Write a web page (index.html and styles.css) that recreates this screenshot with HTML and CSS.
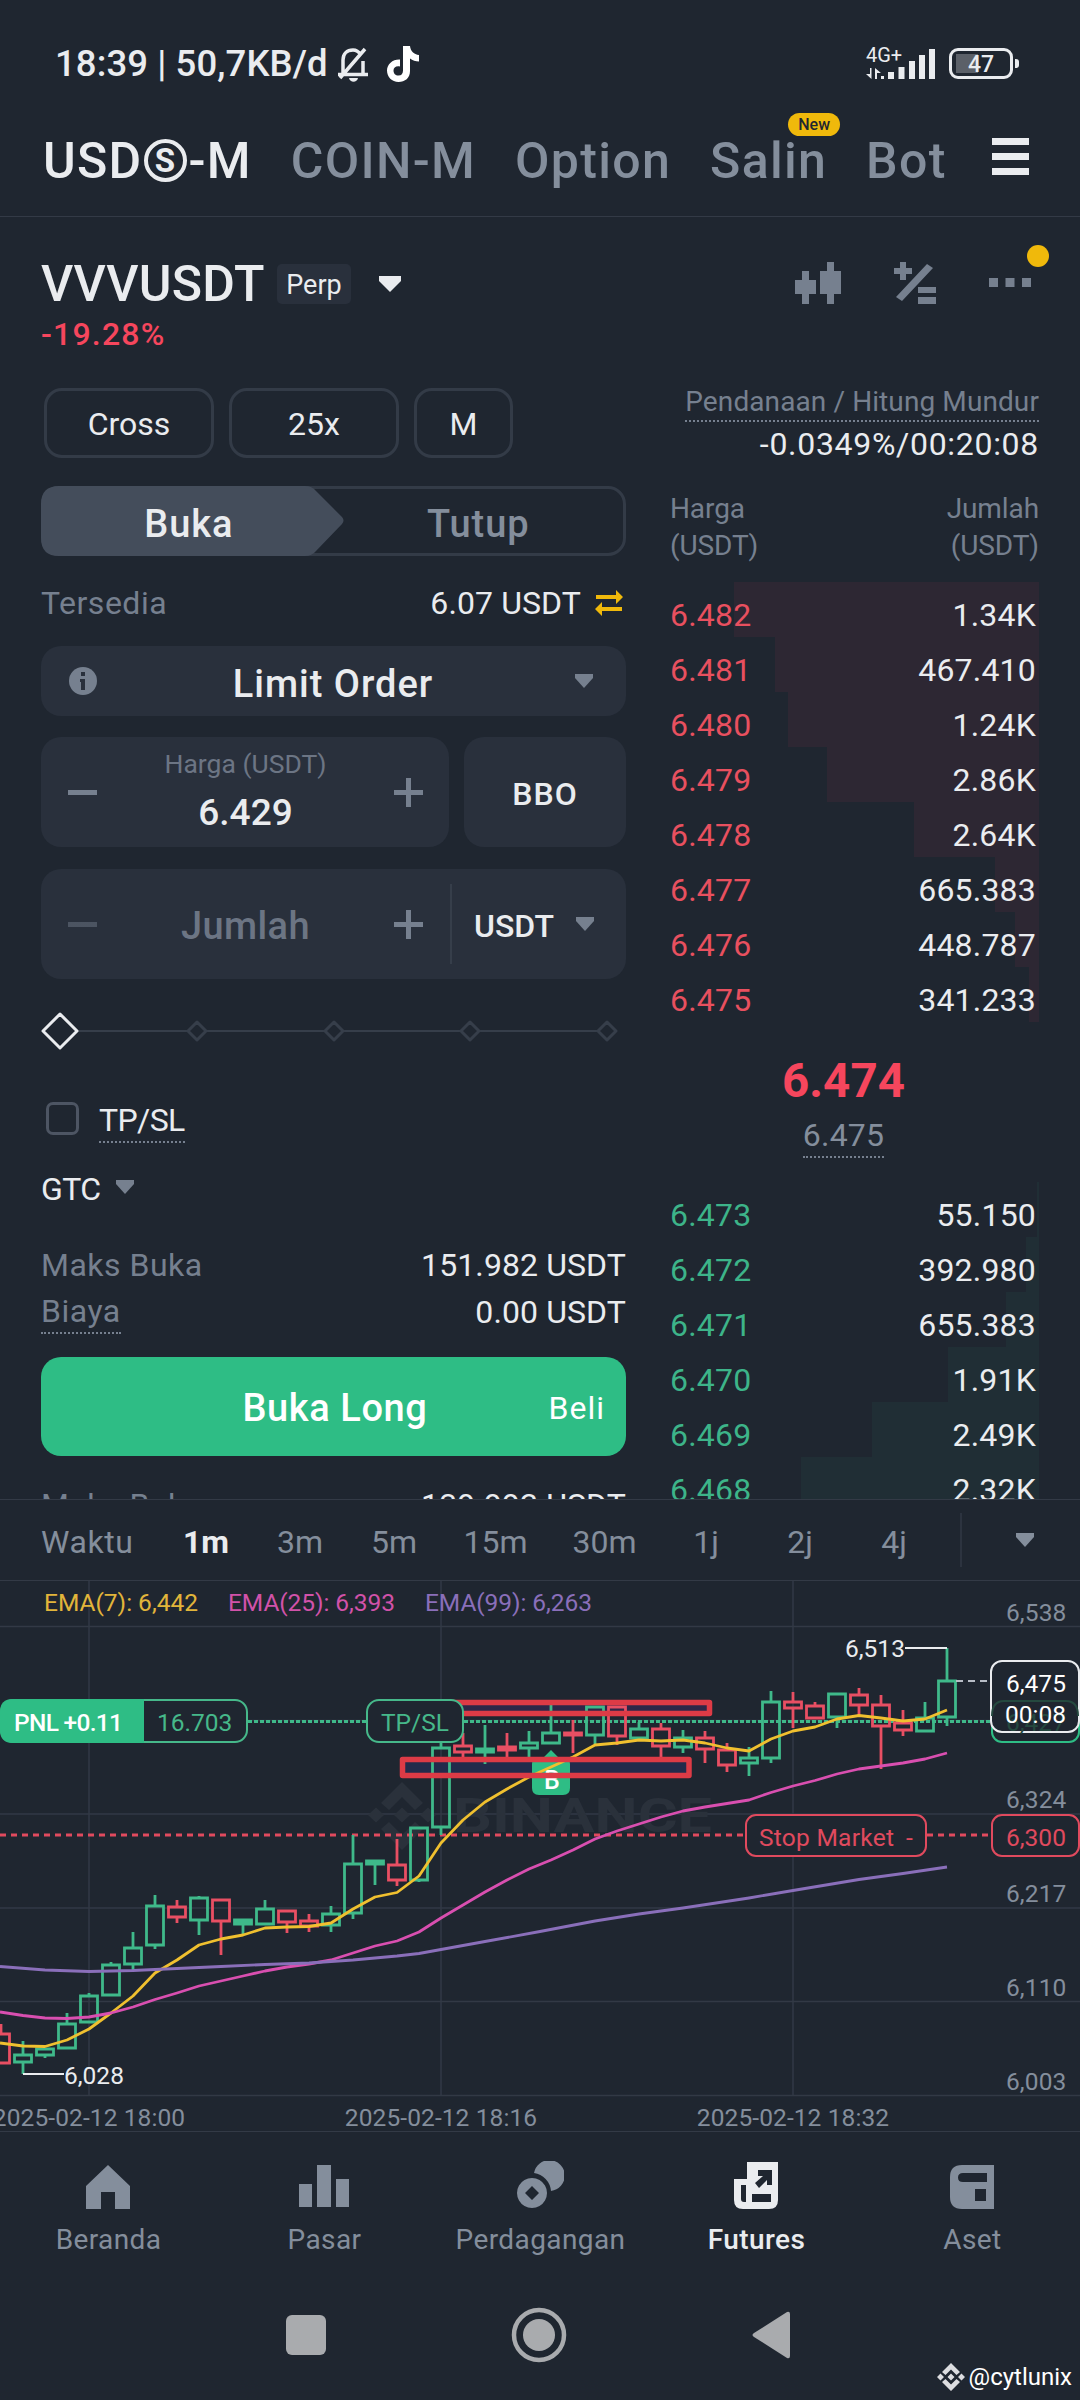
FILE: index.html
```
<!DOCTYPE html>
<html lang="id">
<head>
    <meta charset="UTF-8">
    <meta name="viewport" content="width=device-width, initial-scale=1.0">
    <title>VVVUSDT Perp</title>
    <link rel="stylesheet" href="styles.css">
</head>
<body>
    <div class="status-bar">
        <span class="status-text">18:39 | 50,7KB/d</span>
        <svg class="bell" width="38" height="38" viewBox="0 0 38 38">
            <path d="M9 28V15c0-6 4-10 10-10 3 0 6 2 8 5M29 16v12M4 29.500h30M6 33L31 4" fill="none" stroke="#eaecef" stroke-width="3.500"/>
            <path d="M15 33h9c-1 5-8 5-9 0z" fill="#eaecef"/>
        </svg>
        <svg class="tiktok" width="34" height="38" viewBox="0 0 34 38">
            <path d="M17 1h7c.5 5 4 8.500 9 9v6.500c-3.500 0-6.500-1-9-3V26c0 7-5 11-11.500 11S1 32 1 25.500 7 14 14 14.500v7c-4-.8-6.500 1-6.500 4s2 5 5 5 4.500-2 4.500-5z" fill="#fff"/>
        </svg>
        <div class="signal">
            <span>4G+</span>
            <svg width="18" height="11" viewBox="0 0 18 11">
                <path d="M4 0v6h-4l5.500 5V0zM9 11V0l6 5h-4v6zM15 8h3v3h-3z" fill="#eaecef"/>
            </svg>
        </div>
        <svg class="bars" width="48" height="32" viewBox="0 0 48 32">
            <path d="M0 24h6v7H0zM10.500 19h6v12h-6zM21 13h6v18h-6zM31 7h6v24h-6zM41 1h6v30h-6z" fill="#eaecef"/>
        </svg>
        <div class="battery"><span>47</span></div>
    </div>

    <div class="tabs">
        <span class="tab active">USD<span class="coin">S</span>-M</span>
        <span class="tab">COIN-M</span>
        <span class="tab">Option</span>
        <span class="tab">Salin<span class="new">New</span></span>
        <span class="tab">Bot</span>
        <div class="menu"><i></i><i></i><i></i></div>
    </div>

    <div class="pair">
        <div class="pair-row">
            <span class="symbol">VVVUSDT</span>
            <span class="perp">Perp</span>
            <svg width="24" height="18" viewBox="0 0 24 18"><path d="M1 1h22v5L12 17 1 6z" fill="#eaecef"/></svg>
            <div class="pair-icons">
                <svg width="46" height="42" viewBox="0 0 46 42">
                    <path d="M0 18h7V9h7v9h7v14h-7v10H7V32H0zM25 9h7V0h7v9h7v23h-7v10h-7V32h-7z"/>
                </svg>
                <svg width="42" height="42" viewBox="0 0 42 42">
                    <path d="M6 0h6v6h6v6h-6v6H6v-6H0V6h6zM33 2l6 4L8 39l-6-4zM24 25h18v6H24zM24 35h18v7H24z"/>
                </svg>
                <svg width="42" height="42" viewBox="0 0 42 42">
                    <path d="M0 16h9v9H0zM16.500 16h9v9h-9zM33 16h9v9h-9z"/>
                </svg>
                <span class="dot"></span>
            </div>
        </div>
        <div class="change">-19.28%</div>
    </div>

    <div class="trade">
        <div class="order">
            <div class="modes">
                <div class="mode">Cross</div>
                <div class="mode">25x</div>
                <div class="mode small">M</div>
            </div>
            <div class="switch">
                <svg width="304" height="70" viewBox="0 0 304 70">
                    <path d="M18 0H264q7 0 11 5L301 31q3 3.500 0 7L275 65q-4 5-11 5H18Q0 70 0 52V18Q0 0 18 0z" fill="#444d5b"/>
                </svg>
                <span class="on">Buka</span>
                <span>Tutup</span>
            </div>
            <div class="line available">
                <span class="muted">Tersedia</span>
                <span class="value">6.07 USDT</span>
                <svg width="30" height="28" viewBox="0 0 30 28">
                    <path d="M2 6h20V1l7 7-7 7v-5H2zM28 18H8v-5l-7 7 7 7v-5h20z" fill="#f0b90b"/>
                </svg>
            </div>
            <div class="field select">
                <svg width="28" height="28" viewBox="0 0 28 28">
                    <circle cx="14" cy="14" r="14" fill="#76808f"/>
                    <path d="M12 5h4v4h-4zM11 12h5v11h-4v-8h-1z" fill="#29303c"/>
                </svg>
                <span>Limit Order</span>
                <svg width="18" height="14" viewBox="0 0 18 14"><path d="M0 0h18v4L9 14 0 4z" fill="#76808f"/></svg>
            </div>
            <div class="price-row">
                <div class="field stepper">
                    <span class="minus"></span>
                    <div class="price">
                        <label>Harga (USDT)</label>
                        <b>6.429</b>
                    </div>
                    <span class="plus"></span>
                </div>
                <div class="field bbo">BBO</div>
            </div>
            <div class="field amount">
                <div class="stepper">
                    <span class="minus dim"></span>
                    <span class="placeholder">Jumlah</span>
                    <span class="plus"></span>
                </div>
                <div class="unit">
                    USDT
                    <svg width="18" height="14" viewBox="0 0 18 14"><path d="M0 0h18v4L9 14 0 4z" fill="#76808f"/></svg>
                </div>
            </div>
            <svg class="slider" width="585" height="40" viewBox="0 0 585 40">
                <path d="M36 20H556" stroke="#363e4a" stroke-width="2"/>
                <g fill="#1f2630" stroke="#363e4a" stroke-width="3" stroke-linejoin="round">
                    <path d="M156 11l9 9-9 9-9-9zM293 11l9 9-9 9-9-9zM429 11l9 9-9 9-9-9zM566 11l9 9-9 9-9-9z"/>
                    <path d="M19 3l17 17-17 17L2 20z" stroke="#eaecef"/>
                </g>
            </svg>
            <div class="tpsl">
                <span class="checkbox"></span>
                <span class="dotted">TP/SL</span>
            </div>
            <div class="gtc">
                GTC
                <svg width="18" height="14" viewBox="0 0 18 14"><path d="M0 0h18v4L9 14 0 4z" fill="#76808f"/></svg>
            </div>
            <div class="line max"><span class="muted">Maks Buka</span><span class="value">151.982 USDT</span></div>
            <div class="line"><span class="muted dotted">Biaya</span><span class="value">0.00 USDT</span></div>
            <div class="buy"><span>Buka Long</span><em>Beli</em></div>
            <div class="line next"><span class="muted">Maks Buka</span><span class="value">139.992 USDT</span></div>
        </div>

        <div class="book">
            <div class="funding"><span>Pendanaan / Hitung Mundur</span></div>
            <div class="countdown">-0.0349%/00:20:08</div>
            <div class="book-head">
                <span>Harga<br>(USDT)</span>
                <span>Jumlah<br>(USDT)</span>
            </div>
            <div class="asks" id="asks"></div>
            <div class="last">6.474</div>
            <div class="mark"><span>6.475</span></div>
            <div class="bids" id="bids"></div>
        </div>
    </div>

    <div class="intervals">
        <span class="title">Waktu</span>
        <span class="active">1m</span>
        <span>3m</span>
        <span>5m</span>
        <span>15m</span>
        <span>30m</span>
        <span>1j</span>
        <span>2j</span>
        <span>4j</span>
        <div class="more">
            <svg width="18" height="14" viewBox="0 0 18 14"><path d="M0 0h18v4L9 14 0 4z" fill="#848e9c"/></svg>
        </div>
    </div>

    <!-- viewBox keeps the y offset of the chart on the screen -->
    <svg class="chart" width="1080" height="550" viewBox="0 1581 1080 550">
        <path class="grid" d="M0 1626.500H1080M0 1720.500H1080M0 1814H1080M0 1908H1080M0 2001.500H1080M0 2095.500H1080M89 1581V2095M441 1581V2095M793 1581V2095"/>
        <g class="logo-mark">
            <path d="M402 1782l21 21-8 7-13-13-13 13-8-7zM402 1850l21-21-8-7-13 13-13-13-8 7zM376 1807.500l8 7.500-8 7.500-8-7.500zM402 1807.500l8 7.500-8 7.500-8-7.500zM428 1807.500l8 7.500-8 7.500-8-7.500z"/>
            <text x="453" y="1832" textLength="259" lengthAdjust="spacingAndGlyphs">BINANCE</text>
        </g>
        <path d="M0 1835H745M927 1835H991" stroke="#e04a5e" stroke-width="3" stroke-dasharray="6 5"/>
        <path d="M248 1721.500H991" stroke="#3fb98a" stroke-width="3" stroke-dasharray="4 2"/>
        <rect x="430" y="1702" width="279" height="12" fill="#2e2748"/>
        <rect x="402" y="1759" width="287" height="17" fill="#232b4b"/>
        <path d="M551 1750l7 7h5q7 0 7 7v24q0 7-7 7h-24q-7 0-7-7v-24q0-7 7-7h5z" fill="#2ebd85"/>
        <text x="544" y="1789" class="buy-mark">B</text>
        <g id="candles"></g>
        <polyline class="ema" stroke="#f0c02f" points="0,2043 23,2046 45,2046.500 67,2040 89,2029 111,2013 133,1996 155,1973 177,1960 199,1945 221,1939 243,1935 265,1928 287,1927 309,1926.500 331,1923 353,1909 375,1897 397,1892.500 419,1876 441,1843 463,1820 485,1802 507,1789 529,1777 551,1767 573,1757 595,1745 617,1743 639,1740 661,1741 683,1740 705,1743 727,1748 749,1751 771,1739 793,1731 815,1727 837,1719 859,1715.500 881,1718 903,1721 925,1719 947,1710"/>
        <polyline class="ema" stroke="#d94fb0" points="0,2012 23,2015.500 45,2018 67,2018.500 89,2017 111,2013 133,2007 155,1999.500 177,1993 199,1986 221,1981 243,1976 265,1971 287,1967 309,1964 331,1960 353,1953 375,1946 397,1941 419,1932 441,1918 463,1905 485,1892 507,1880 529,1869 551,1860 573,1850 595,1839 617,1831 639,1824 661,1817 683,1811 705,1807 727,1803.500 749,1800 771,1792.500 793,1786 815,1780.500 837,1774 859,1769 881,1766 903,1763 925,1759 947,1753"/>
        <polyline class="ema" stroke="#8a6fba" points="0,1966.500 45,1970 89,1971.500 133,1970.500 177,1968.500 221,1966.500 265,1964.500 309,1963 353,1960 397,1956 419,1953.500 441,1949.500 485,1941.500 540,1931.500 595,1921 639,1914 683,1908 749,1898 793,1890.500 859,1879.500 903,1873.500 947,1867"/>
        <g fill="none" stroke="#dd3b46" stroke-width="5.500" stroke-linejoin="round">
            <rect x="430" y="1702.500" width="279.500" height="11"/>
            <rect x="402.500" y="1759.500" width="286.500" height="16"/>
        </g>

        <g class="label">
            <text x="44" y="1611" fill="#e2b53a" textLength="154">EMA(7): 6,442</text>
            <text x="228" y="1611" fill="#d152a9" textLength="167">EMA(25): 6,393</text>
            <text x="425" y="1611" fill="#8a6fba" textLength="167">EMA(99): 6,263</text>
        </g>
        <g class="label axis">
            <text x="1006" y="1621">6,538</text>
            <text x="1006" y="1808">6,324</text>
            <text x="1006" y="1902">6,217</text>
            <text x="1006" y="1996">6,110</text>
            <text x="1006" y="2090">6,003</text>
            <text x="89" y="2126" text-anchor="middle">2025-02-12 18:00</text>
            <text x="441" y="2126" text-anchor="middle">2025-02-12 18:16</text>
            <text x="793" y="2126" text-anchor="middle">2025-02-12 18:32</text>
        </g>

        <path d="M905 1648H947M23 2074H64" stroke="#eaecef" stroke-width="2"/>
        <path d="M956 1681H990" stroke="#b7bdc6" stroke-width="2" stroke-dasharray="7 5"/>
        <g class="label" fill="#eaecef">
            <text x="845" y="1657">6,513</text>
            <text x="64" y="2084">6,028</text>
        </g>

        <rect class="tag" x="1" y="1700" width="246" height="42" rx="12" stroke="#46b88a"/>
        <path d="M144 1699V1743H13Q0 1743 0 1730V1712Q0 1699 13 1699z" fill="#2ebd85"/>
        <rect class="tag" x="367" y="1700" width="96" height="42" rx="12" stroke="#46b88a"/>
        <rect class="tag" x="746" y="1815" width="180" height="41" rx="10" stroke="#e04a5e"/>
        <rect class="tag" x="992" y="1815" width="87" height="41" rx="10" stroke="#e04a5e"/>
        <rect class="tag" x="992" y="1701" width="87" height="41" rx="10" stroke="#2ebd85"/>
        <rect class="tag" x="991" y="1661" width="88" height="71" rx="11" stroke="#eaecef"/>
        <path d="M992 1716Q992 1701 1004 1701H1066Q1078 1701 1078 1716" fill="none" stroke="#25493f" stroke-width="2"/>
        <text class="label" x="1006" y="1731" fill="#25493f">6,427</text>
        <g class="label">
            <text x="14" y="1731" fill="#fff" class="medium" textLength="109">PNL +0.11</text>
            <text x="157" y="1731" fill="#46b88a">16.703</text>
            <text x="381" y="1731" fill="#46b88a">TP/SL</text>
            <text x="759" y="1846" fill="#e04a5e" textLength="135">Stop Market</text>
            <text x="906" y="1846" fill="#e04a5e">-</text>
            <text x="1006" y="1846" fill="#e04a5e">6,300</text>
            <text x="1006" y="1692" fill="#fff">6,475</text>
            <text x="1005" y="1723" fill="#fff">00:08</text>
        </g>
    </svg>

    <div class="nav">
        <div class="nav-item">
            <svg width="44" height="44" viewBox="0 0 44 44"><path d="M22 0l22 21v23H29V27H15v17H0V21z"/></svg>
            <span>Beranda</span>
        </div>
        <div class="nav-item">
            <svg width="50" height="44" viewBox="0 0 50 44"><path d="M0 19h13v23H0zM18 0h14v42H18zM37 14h13v28H37z"/></svg>
            <span>Pasar</span>
        </div>
        <div class="nav-item">
            <svg width="48" height="48" viewBox="0 0 48 48">
                <path d="M18 12A15.500 15.500 0 1 1 35 30A20 20 0 0 0 18 12z"/>
                <path fill-rule="evenodd" d="M16 17a15 15 0 1 0 .01 0zM16 25l7 7-7 7-7-7z"/>
            </svg>
            <span>Perdagangan</span>
        </div>
        <div class="nav-item active">
            <svg width="44" height="47" viewBox="0 0 44 47">
                <path fill-rule="evenodd" d="M13 0h31v38q0 9-9 9H9q-9 0-9-9V17h13zM24 8v6h5l-8 7 4 5 8-8v5h5V8zM7 23v14q0 3 3 3h2V23zM18 32v8h19v-8z"/>
            </svg>
            <span>Futures</span>
        </div>
        <div class="nav-item">
            <svg width="44" height="44" viewBox="0 0 44 44">
                <path fill-rule="evenodd" d="M12 0h32v44H12Q0 44 0 32V12Q0 0 12 0zM13 8q-5 0-5 4.500T13 17h24V8zM25 24v12h11V24z"/>
            </svg>
            <span>Aset</span>
        </div>
    </div>

    <div class="system">
        <svg width="40" height="40" viewBox="0 0 40 40"><rect width="40" height="40" rx="6"/></svg>
        <svg width="56" height="56" viewBox="0 0 56 56">
            <circle cx="28" cy="28" r="25" fill="none" stroke="#a9abae" stroke-width="4.500"/>
            <circle cx="28" cy="28" r="16"/>
        </svg>
        <svg width="38" height="48" viewBox="0 0 38 48"><path d="M2 22L35 1q3-1 3 2v42q0 3-3 2L2 26q-3-2 0-4z"/></svg>
        <div class="author">
            <svg width="28" height="28" viewBox="0 0 28 28">
                <path d="M14 0l9 9-3.500 3L14 6.500 8.500 12 5 9zM14 28l9-9-3.500-3-5.500 5.500L8.500 16 5 19zM3.500 10.500L7 14l-3.500 3.500L0 14zM14 10.500l3.500 3.500-3.500 3.500-3.500-3.500zM24.500 10.500L28 14l-3.500 3.500L21 14z"/>
            </svg>
            @cytlunix
        </div>
    </div>

    <script src="script.js"></script>
</body>
</html>
```
FILE: styles.css
```
* {
    box-sizing: border-box;
}
body {
    margin: 0;
    width: 1080px;
    height: 2400px;
    overflow: hidden;
    font-family: Roboto, "Noto Sans", sans-serif;
    font-size: 32px;
    color: #eaecef;
    background: #1f2630;
}
svg {
    display: block;
    flex: none;
}

/* status bar */
.status-bar {
    display: flex;
    align-items: center;
    height: 94px;
    padding: 33px 67px 0 55px;
}
.status-text {
    font-size: 36.5px;
    font-weight: 500;
    width: 279px;
    white-space: nowrap;
    letter-spacing: 0.1px;
}
.tiktok {
    margin-left: 14px;
}
.signal {
    margin-left: auto;
    width: 22px;
    height: 32px;
    font-size: 20px;
    line-height: 14px;
    white-space: nowrap;
}
.signal svg {
    margin-top: 6px;
}
.battery {
    position: relative;
    margin-left: 13px;
    width: 64px;
    height: 31px;
    border: 3px solid #eaecef;
    border-radius: 9px;
    background: linear-gradient(#5b6068, #5b6068) 4px 3px / 22px 19px no-repeat;
    font-size: 23px;
    font-weight: 500;
    line-height: 27px;
    text-align: center;
}
.battery::after {
    content: "";
    position: absolute;
    right: -9px;
    top: 8px;
    width: 4px;
    height: 9px;
    border-radius: 0 3px 3px 0;
    background: #eaecef;
}

/* product tabs */
.tabs {
    display: flex;
    align-items: center;
    gap: 39px;
    height: 123px;
    padding: 12px 51px 0 43px;
    border-bottom: 1px solid #333a46;
}
.tab {
    position: relative;
    font-size: 50px;
    font-weight: 500;
    line-height: 60px;
    color: #848e9c;
    white-space: nowrap;
    letter-spacing: 1.3px;
}
.tab.active {
    color: #eaecef;
}
.coin {
    display: inline-block;
    width: 43px;
    height: 43px;
    margin: -6px 2px 0 1px;
    border: 4px solid #eaecef;
    border-radius: 50%;
    font-size: 33px;
    font-weight: 700;
    line-height: 36px;
    letter-spacing: 0;
    text-align: center;
    vertical-align: 6px;
}
.new {
    position: absolute;
    right: -13px;
    top: -18px;
    width: 52px;
    height: 23px;
    border-radius: 12px;
    background: #f0b90b;
    color: #1f2630;
    font-size: 16px;
    letter-spacing: 0;
    line-height: 24px;
    text-align: center;
}
.menu {
    display: flex;
    flex-direction: column;
    gap: 8px;
    margin: 0 0 9px auto;
}
.menu i {
    width: 37px;
    height: 7px;
    background: #eaecef;
}

/* pair header */
.pair {
    height: 137px;
    padding: 37px 49px 0 41px;
}
.pair-row {
    display: flex;
    align-items: center;
    height: 60px;
}
.symbol {
    width: 236px;
    font-size: 50px;
    font-weight: 500;
    letter-spacing: 0.3px;
}
.perp {
    margin-right: 27px;
    width: 74px;
    height: 40px;
    border-radius: 5px;
    background: #29303c;
    font-size: 27px;
    line-height: 43px;
    text-align: center;
}
.pair-icons {
    position: relative;
    display: flex;
    gap: 53px;
    margin: -2px 0 0 auto;
    fill: #76808f;
}
.dot {
    position: absolute;
    right: -18px;
    top: -17px;
    width: 22px;
    height: 22px;
    border-radius: 50%;
    background: #f0b90b;
}
.change {
    color: #f6465d;
    font-weight: 500;
    line-height: 40px;
    letter-spacing: 1.2px;
}

/* order form */
.trade {
    display: flex;
    justify-content: space-between;
    height: 1146px;
    padding: 0 41px;
    border-bottom: 1px solid #333a46;
    overflow: hidden;
}
.order {
    width: 585px;
    padding-top: 34px;
}
.muted {
    color: #76808f;
    letter-spacing: 0.5px;
}
.modes {
    display: flex;
    gap: 15px;
    margin-left: 3px;
}
.mode {
    width: 170px;
    height: 70px;
    border: 3px solid #333b47;
    border-radius: 18px;
    line-height: 67px;
    text-align: center;
}
.mode.small {
    width: 99px;
}
.switch {
    position: relative;
    display: flex;
    height: 70px;
    margin-top: 28px;
    border: 3px solid #333b47;
    border-radius: 18px;
    font-size: 38px;
    font-weight: 500;
    line-height: 70px;
    letter-spacing: 0.9px;
    color: #848e9c;
}
.switch svg {
    position: absolute;
    left: -3px;
    top: -3px;
}
.switch span {
    position: relative;
    width: 290px;
    text-align: center;
}
.switch .on {
    color: #eaecef;
}
.line {
    display: flex;
    align-items: center;
    height: 47px;
    line-height: 42px;
}
.line .value {
    margin-left: auto;
    letter-spacing: 0.1px;
}
.available {
    height: 44px;
    margin-top: 25px;
    padding-right: 2px;
}
.available svg {
    margin-left: 13px;
}
.field {
    border-radius: 20px;
    background: #29303c;
}
.select {
    display: flex;
    align-items: center;
    justify-content: space-between;
    height: 70px;
    margin-top: 21px;
    padding: 0 33px 0 28px;
    font-size: 38px;
    font-weight: 500;
    line-height: 70px;
    letter-spacing: 1px;
}
.select span {
    padding: 6px 6px 0 0;
}
.price-row {
    display: flex;
    gap: 15px;
    margin-top: 21px;
}
.stepper {
    display: flex;
    align-items: center;
    justify-content: space-between;
    width: 408px;
    height: 110px;
    padding: 0 26px 0 27px;
}
.minus,
.plus {
    width: 29px;
    height: 29px;
    background: linear-gradient(#76808f, #76808f) center / 29px 5px no-repeat;
}
.plus {
    background: linear-gradient(#76808f, #76808f) center / 29px 5px no-repeat,
                linear-gradient(#76808f, #76808f) center / 5px 29px no-repeat;
}
.dim {
    opacity: 0.45;
}
.price {
    display: flex;
    flex-direction: column;
    height: 97px;
    text-align: center;
}
.price label {
    font-size: 26.5px;
    line-height: 40px;
    color: #6c7584;
}
.price b {
    font-size: 37px;
    font-weight: 500;
    line-height: 58px;
}
.bbo {
    width: 162px;
    height: 110px;
    font-weight: 500;
    line-height: 115px;
    letter-spacing: 1px;
    text-align: center;
}
.amount {
    display: flex;
    align-items: center;
    height: 110px;
    margin-top: 22px;
}
.placeholder {
    padding-top: 4px;
    font-size: 38px;
    color: #6c7584;
    font-weight: 500;
    letter-spacing: 0.4px;
}
.unit {
    display: flex;
    align-items: center;
    justify-content: space-between;
    width: 144px;
    height: 80px;
    margin-left: 1px;
    padding: 4px 0 0 22px;
    border-left: 2px solid #363e4a;
    font-weight: 500;
}
.unit svg {
    margin: 0 0 4px;
}
.slider {
    margin-top: 32px;
}
.tpsl {
    display: flex;
    align-items: center;
    height: 44px;
    margin-top: 48px;
    padding-left: 5px;
    line-height: 42px;
    letter-spacing: -0.6px;
}
.checkbox {
    width: 33px;
    height: 33px;
    margin: 0 20px 6px 0;
    border: 3px solid #4d5563;
    border-radius: 7px;
}
.dotted {
    border-bottom: 2px dotted #76808f;
}
.gtc {
    display: flex;
    align-items: center;
    height: 44px;
    margin-top: 24px;
    letter-spacing: -0.6px;
}
.gtc svg {
    margin: 0 0 5px 16px;
}
.max {
    margin-top: 30px;
}
.buy {
    position: relative;
    height: 99px;
    margin-top: 22px;
    padding-left: 3px;
    border-radius: 20px;
    background: #2ebd85;
    color: #fff;
    font-size: 38px;
    font-weight: 500;
    line-height: 103px;
    letter-spacing: 0.6px;
    text-align: center;
}
.buy em {
    position: absolute;
    right: 21px;
    font-size: 32px;
    font-style: normal;
    font-weight: 400;
    letter-spacing: 1px;
}
.next {
    margin-top: 25px;
}

/* order book */
.book {
    width: 369px;
    padding-top: 29px;
    letter-spacing: 0.2px;
}
.funding {
    font-size: 28px;
    line-height: 37px;
    text-align: right;
    letter-spacing: 0.1px;
    color: #76808f;
    white-space: nowrap;
}
.funding span {
    display: inline-block;
    border-bottom: 2px dotted #76808f;
}
.countdown {
    line-height: 44px;
    text-align: right;
    letter-spacing: 0.7px;
}
.book-head {
    display: flex;
    justify-content: space-between;
    margin: 24px 0 18px;
    font-size: 28px;
    line-height: 37px;
    letter-spacing: -0.1px;
    color: #76808f;
}
.book-head span:last-child {
    text-align: right;
}
.row {
    position: relative;
    display: flex;
    justify-content: space-between;
    height: 55px;
    padding: 11px 3px 0 0;
    line-height: 44px;
}
.row span {
    position: relative;
}
.depth {
    position: absolute;
    right: 0;
    top: 0;
    height: 55px;
}
.asks .depth {
    background: #2d2733;
}
.bids .depth {
    background: #202e35;
}
.asks .row-price {
    color: #e8505f;
}
.bids .row-price {
    color: #3db489;
}
.last {
    margin-top: 29px;
    padding-right: 22px;
    font-size: 47.5px;
    font-weight: 700;
    line-height: 60px;
    letter-spacing: 0;
    text-align: center;
    color: #f6465d;
}
.mark {
    height: 44px;
    margin: 3px 0 24px;
    padding-right: 22px;
    line-height: 42px;
    text-align: center;
    color: #848e9c;
}
.mark span {
    display: inline-block;
    border-bottom: 2px dotted #76808f;
}

/* chart */
.intervals {
    display: flex;
    align-items: center;
    height: 81px;
    padding: 0 46px 0 41px;
    border-bottom: 1px solid #333a46;
    color: #848e9c;
}
.intervals span {
    min-width: 94px;
    padding: 4px 22.5px 0;
    text-align: center;
}
.intervals .title {
    width: 118px;
    padding: 4px 0 0;
    text-align: left;
    letter-spacing: 0.6px;
}
.intervals .active {
    color: #eaecef;
    font-weight: 700;
    padding: 4px 20px 0;
}
.more {
    display: flex;
    align-items: center;
    justify-content: flex-end;
    width: 74px;
    height: 54px;
    margin-left: auto;
    border-left: 2px solid #2c333f;
}
.chart {
    box-sizing: content-box;
    border-bottom: 1px solid #333a46;
}
.grid {
    fill: none;
    stroke: #323945;
    stroke-width: 1.5;
}
.logo-mark {
    fill: #2a313b;
    font-size: 49px;
    font-weight: 700;
}
.label {
    font-size: 24.5px;
}
.axis {
    fill: #848e9c;
    letter-spacing: 0.1px;
}
.medium {
    font-weight: 500;
}
.buy-mark {
    fill: #fff;
    font-size: 25px;
    font-weight: 500;
}
.ema {
    fill: none;
    stroke-width: 2.8;
    stroke-linejoin: round;
}
.tag {
    fill: #1f2630;
    stroke-width: 2;
}

/* bottom navigation */
.nav {
    display: flex;
    height: 125px;
    padding-top: 33px;
    fill: #848e9c;
    color: #848e9c;
}
.nav-item {
    display: flex;
    flex-direction: column;
    align-items: center;
    justify-content: flex-end;
    gap: 12px;
    width: 216px;
    height: 92px;
    font-size: 28px;
    line-height: 36px;
    letter-spacing: 0.4px;
}
.nav-item.active {
    fill: #eaecef;
    color: #eaecef;
    font-weight: 500;
}
.nav-item span {
    padding: 1px 0 0 1px;
    margin-bottom: -1px;
}
.system {
    position: relative;
    display: flex;
    align-items: center;
    gap: 185px;
    height: 143px;
    padding: 13px 0 0 286px;
    fill: #a9abae;
}
.author {
    position: absolute;
    right: 8px;
    bottom: 9px;
    display: flex;
    align-items: center;
    gap: 4px;
    font-size: 24px;
    fill: #dcdde0;
    color: #fff;
}
```
FILE: script.js
```
// [price, amount, depth bar width]
const asks = [
    ["6.482", "1.34K", 305],
    ["6.481", "467.410", 264],
    ["6.480", "1.24K", 251],
    ["6.479", "2.86K", 212],
    ["6.478", "2.64K", 125],
    ["6.477", "665.383", 44],
    ["6.476", "448.787", 24],
    ["6.475", "341.233", 10]
];
const bids = [
    ["6.473", "55.150", 2],
    ["6.472", "392.980", 13],
    ["6.471", "655.383", 33],
    ["6.470", "1.91K", 91],
    ["6.469", "2.49K", 167],
    ["6.468", "2.32K", 238]
];

// [x, up, high, body top, body bottom, low]
const candles = [
    [1, 0, 2024, 2033, 2064, 2064],
    [23, 1, 2041, 2054, 2063, 2074],
    [45, 1, 2048, 2048, 2056, 2058],
    [67, 1, 2013, 2023, 2049, 2049],
    [89, 1, 1993, 1995, 2023, 2023],
    [111, 1, 1962, 1964, 1996, 1996],
    [133, 1, 1932, 1947, 1965, 1970],
    [155, 1, 1895, 1905, 1946, 1949],
    [177, 0, 1900, 1906, 1918, 1923],
    [199, 1, 1896, 1897, 1921, 1935],
    [221, 0, 1899, 1899, 1922, 1955],
    [243, 1, 1919, 1919, 1925, 1935],
    [265, 1, 1900, 1908, 1925, 1925],
    [287, 0, 1910, 1910, 1923, 1933],
    [309, 0, 1914, 1920, 1927, 1932],
    [331, 1, 1906, 1913, 1926, 1932],
    [353, 1, 1835, 1863, 1914, 1919],
    [375, 1, 1860, 1860, 1865, 1885],
    [397, 0, 1839, 1864, 1881, 1886],
    [419, 1, 1827, 1827, 1881, 1882],
    [441, 1, 1740, 1747, 1828, 1835],
    [463, 0, 1733, 1745, 1753, 1762],
    [485, 1, 1725, 1748, 1753, 1764],
    [507, 0, 1733, 1746, 1751, 1757],
    [529, 1, 1731, 1742, 1749, 1762],
    [551, 1, 1705, 1732, 1744, 1744],
    [573, 0, 1720, 1732, 1736, 1753],
    [595, 1, 1706, 1706, 1736, 1744],
    [617, 0, 1706, 1706, 1737, 1745],
    [639, 1, 1722, 1728, 1739, 1739],
    [661, 0, 1723, 1728, 1747, 1757],
    [683, 1, 1730, 1737, 1748, 1753],
    [705, 0, 1731, 1737, 1750, 1763],
    [727, 0, 1743, 1749, 1766, 1772],
    [749, 1, 1747, 1757, 1764, 1776],
    [771, 1, 1691, 1701, 1759, 1763],
    [793, 0, 1692, 1701, 1709, 1728],
    [815, 0, 1702, 1705, 1719, 1719],
    [837, 1, 1693, 1693, 1718, 1728],
    [859, 0, 1688, 1694, 1706, 1717],
    [881, 0, 1695, 1704, 1727, 1769],
    [903, 0, 1710, 1722, 1731, 1736],
    [925, 1, 1702, 1717, 1732, 1732],
    [947, 1, 1648, 1680, 1718, 1726]
];

function drawRows(id, rows) {
    document.getElementById(id).innerHTML = rows.map(([price, amount, width]) =>
        `<div class="row"><div class="depth" style="width: ${width}px"></div>` +
        `<span class="row-price">${price}</span><span>${amount}</span></div>`
    ).join("");
}

function drawCandles() {
    document.getElementById("candles").innerHTML = candles.map(([x, up, high, top, bottom, low]) => {
        const color = up ? "#3fb98a" : "#e84f63";
        // very small bodies are drawn solid
        const fill = bottom - top < 7 ? color : "none";
        return `<path d="M${x} ${high}V${top + 1}M${x} ${bottom - 1}V${low}` +
            `M${x - 8.5} ${top + 1}H${x + 8.5}V${bottom - 1}H${x - 8.5}Z" ` +
            `fill="${fill}" stroke="${color}" stroke-width="2.8"/>`;
    }).join("");
}

drawRows("asks", asks);
drawRows("bids", bids);
drawCandles();
```
